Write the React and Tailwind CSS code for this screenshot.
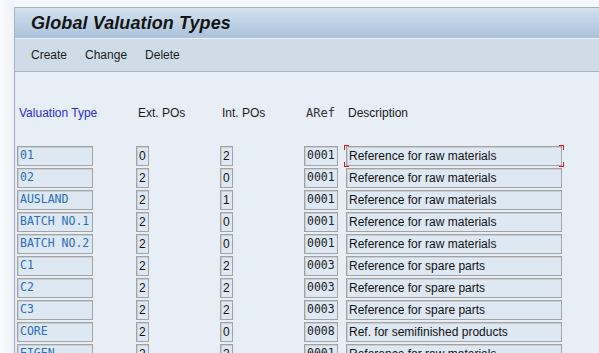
import React from "react";

const rows = [
  { type: "01", ext: "0", int: "2", aref: "0001", desc: "Reference for raw materials" },
  { type: "02", ext: "2", int: "0", aref: "0001", desc: "Reference for raw materials" },
  { type: "AUSLAND", ext: "2", int: "1", aref: "0001", desc: "Reference for raw materials" },
  { type: "BATCH NO.1", ext: "2", int: "0", aref: "0001", desc: "Reference for raw materials" },
  { type: "BATCH NO.2", ext: "2", int: "0", aref: "0001", desc: "Reference for raw materials" },
  { type: "C1", ext: "2", int: "2", aref: "0003", desc: "Reference for spare parts" },
  { type: "C2", ext: "2", int: "2", aref: "0003", desc: "Reference for spare parts" },
  { type: "C3", ext: "2", int: "2", aref: "0003", desc: "Reference for spare parts" },
  { type: "CORE", ext: "2", int: "0", aref: "0008", desc: "Ref. for semifinished products" },
  { type: "EIGEN", ext: "2", int: "2", aref: "0001", desc: "Reference for raw materials" },
];

const sans = "font-['Liberation_Sans',Arial,sans-serif]";
const mono = "font-['DejaVu_Sans_Mono','Liberation_Mono',monospace]";

// sap-style input cell
const Cell = ({ className, children }) => (
  <div
    className={`h-[20px] shrink-0 border border-[#a3a3a3] bg-[#dde8f3] shadow-[inset_1px_1px_0_#c9ced4] flex items-center px-[2px] overflow-hidden whitespace-nowrap ${className}`}
  >
    {children}
  </div>
);

const Focus = () => (
  <>
    <span className="absolute -left-[2px] -top-[1px] w-[5px] h-[5px] border-l border-t border-[#e0141b]" />
    <span className="absolute -right-[2px] -top-[1px] w-[5px] h-[5px] border-r border-t border-[#e0141b]" />
    <span className="absolute -left-[2px] -bottom-[1px] w-[5px] h-[5px] border-l border-b border-[#e0141b]" />
    <span className="absolute -right-[2px] -bottom-[1px] w-[5px] h-[5px] border-r border-b border-[#e0141b]" />
  </>
);

const App = () => {
  return (
    <div className={`w-[599px] h-[353px] overflow-hidden flex bg-[#f4f7fb] ${sans}`}>
      <div className="w-[14px] shrink-0 bg-gradient-to-r from-[#fbfcfd] to-[#eef2f7]" />
      <div className="flex-1 flex flex-col">
        <div className="h-[7px] shrink-0" />
        <div className="flex-1 flex flex-col border-l border-t border-[#a6b2c2] bg-[#e8eef6]">
          {/* title */}
          <div className="h-[30px] shrink-0 bg-gradient-to-b from-[#d4e1ef] to-[#aac2da] flex items-center pl-[16px]">
            <h1 className="text-[18px] font-bold italic text-[#141414] tracking-[0.1px]">
              Global Valuation Types
            </h1>
          </div>
          {/* toolbar */}
          <div className="h-[34px] shrink-0 border-t border-[#e9f0f7] border-b border-b-[#a7b3c4] bg-[#cfdce7] flex items-center pl-[16px] gap-[18px] text-[12px] text-[#1b1b1b]">
            <span>Create</span>
            <span>Change</span>
            <span>Delete</span>
          </div>
          {/* table */}
          <div className="pt-[33px] text-[12px]">
            <div className="flex h-[16px] items-center">
              <div className="ml-[2px] w-[76px] pl-[2px] whitespace-nowrap text-[#2b2bd6]">Valuation Type</div>
              <div className="ml-[43px] w-[13px] pl-[2px] whitespace-nowrap text-[#1b1b1b]">Ext. POs</div>
              <div className="ml-[71px] w-[13px] pl-[2px] whitespace-nowrap text-[#1b1b1b]">Int. POs</div>
              <div className={`ml-[71px] w-[34px] pl-[2px] whitespace-nowrap text-[12px] text-[#333] ${mono}`}>ARef</div>
              <div className="ml-[8px] w-[216px] pl-[2px] whitespace-nowrap text-[#1b1b1b]">Description</div>
            </div>
            <div className="mt-[25px] flex flex-col gap-[2px]">
              {rows.map((r, i) => (
                <div key={r.type} className="flex">
                  <Cell className={`ml-[2px] w-[76px] text-[11.5px] text-[#2b6db6] ${mono}`}>{r.type}</Cell>
                  <Cell className="ml-[43px] w-[13px] text-[#111]">{r.ext}</Cell>
                  <Cell className="ml-[71px] w-[13px] text-[#111]">{r.int}</Cell>
                  <Cell className={`ml-[71px] w-[34px] text-[11.5px] text-[#222] ${mono}`}>{r.aref}</Cell>
                  <div className="relative ml-[8px]">
                    <Cell className="w-[216px] text-[#111]">{r.desc}</Cell>
                    {i === 0 && <Focus />}
                  </div>
                </div>
              ))}
            </div>
          </div>
        </div>
      </div>
    </div>
  );
};

export default App;
